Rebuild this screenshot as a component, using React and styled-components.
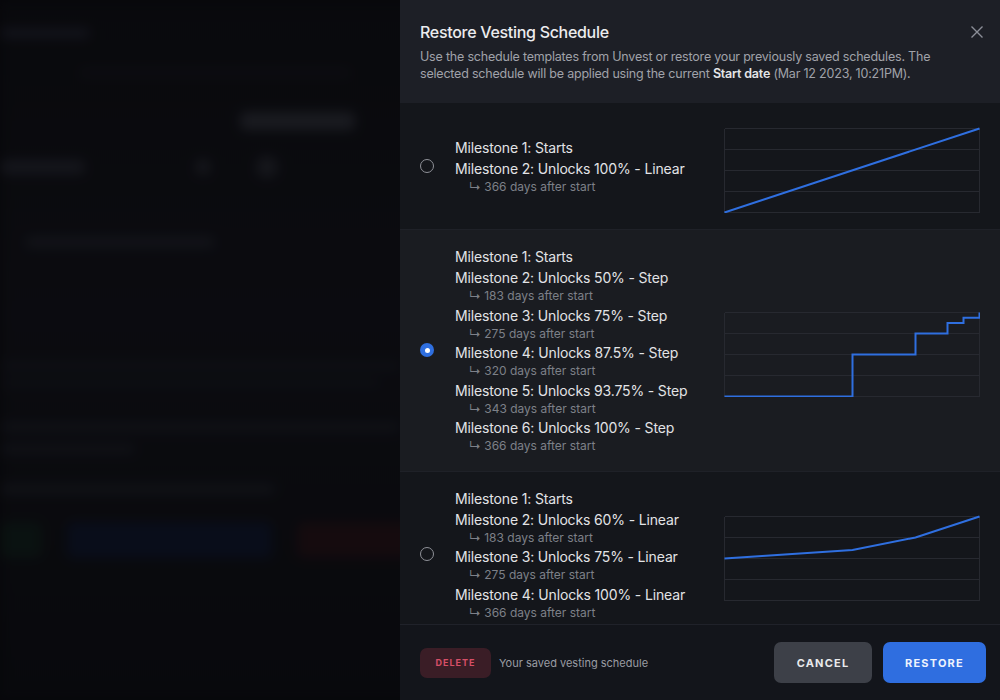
import React from 'react';
import styled, { createGlobalStyle } from 'styled-components';

const GlobalStyle = createGlobalStyle`
  html, body {
    margin: 0;
    padding: 0;
    background: #0b0b0e;
  }
  body {
    font-family: Inter, "Noto Sans", sans-serif;
    -webkit-font-smoothing: antialiased;
  }
  * {
    box-sizing: border-box;
  }
`;

/* blurred page behind the drawer */

const Page = styled.div`
  width: 1000px;
  height: 700px;
  overflow: hidden;
  background: linear-gradient(180deg, #101114 0%, #15161b 45%, #0f1013 100%);
  filter: blur(6px);
`;

const PageRow = styled.div`
  display: flex;
  align-items: center;
  gap: ${(p) => p.$gap || 0}px;
  margin-top: ${(p) => p.$top}px;
  height: ${(p) => p.$h}px;
`;

const Blob = styled.div`
  flex-shrink: 0;
  width: ${(p) => p.$w}px;
  height: ${(p) => p.$h}px;
  margin-left: ${(p) => p.$ml || 0}px;
  background: ${(p) => p.$c};
  border-radius: ${(p) => (p.$round ? '50%' : '6px')};
`;

const Scrim = styled.div`
  position: fixed;
  inset: 0;
  background: rgba(4, 4, 7, 0.55);
`;

/* drawer */

const Drawer = styled.aside`
  position: fixed;
  top: 0;
  right: 0;
  width: 600px;
  height: 100vh;
  display: flex;
  flex-direction: column;
  background: #15171c;
  color: #e3e4e6;
`;

const Header = styled.header`
  flex-shrink: 0;
  background: #1d1f26;
  padding: 21px 17px 21px 20px;
`;

const TitleRow = styled.div`
  display: flex;
  align-items: center;
  justify-content: space-between;
`;

const Title = styled.h2`
  margin: 0;
  font-size: 16px;
  line-height: 22px;
  font-weight: 500;
  letter-spacing: -0.3px;
  color: #ececee;
`;

const CloseButton = styled.button`
  width: 12px;
  height: 12px;
  padding: 0;
  border: 0;
  background: none;
  display: flex;
  cursor: pointer;
`;

const Description = styled.p`
  margin: 5px 0 0;
  max-width: 545px;
  font-size: 12.5px;
  line-height: 17px;
  letter-spacing: -0.2px;
  color: #a0a2a9;

  strong {
    color: #e4e5e8;
    font-weight: 600;
  }
`;

const List = styled.div`
  flex: 1;
  overflow-y: auto;
  scrollbar-width: none;
`;

const Option = styled.label`
  display: flex;
  align-items: center;
  padding: 16px 20px;
  border-bottom: 1px solid #1f2128;
  background: ${(p) => (p.$selected ? '#1a1c21' : '#14161b')};
  cursor: pointer;
`;

const Radio = styled.span`
  flex-shrink: 0;
  width: 14px;
  height: 14px;
  margin-right: 21px;
  border-radius: 50%;
  display: flex;
  align-items: center;
  justify-content: center;
  border: ${(p) => (p.$checked ? 'none' : '1.3px solid #8f9198')};
  background: ${(p) => (p.$checked ? '#2f6fe0' : 'transparent')};

  &::after {
    content: '';
    display: ${(p) => (p.$checked ? 'block' : 'none')};
    width: 5px;
    height: 5px;
    border-radius: 50%;
    background: #fff;
  }
`;

const Milestones = styled.div`
  flex: 1;
  display: flex;
  flex-direction: column;
`;

const MilestoneLine = styled.div`
  font-size: 14px;
  line-height: 21px;
  letter-spacing: -0.15px;
  color: #e2e3e6;
`;

const DaysLine = styled.div`
  padding-left: 14px;
  font-size: 12px;
  line-height: 16.5px;
  color: #7d8088;
`;

const ChartSvg = styled.svg`
  flex-shrink: 0;
  display: block;
`;

const Footer = styled.footer`
  height: 76px;
  flex-shrink: 0;
  display: flex;
  align-items: center;
  padding: 0 14px 0 20px;
  border-top: 1px solid #20222a;
  background: #13151b;
`;

const DeleteButton = styled.button`
  width: 71px;
  height: 30px;
  border: 0;
  border-radius: 7px;
  background: #3a1d26;
  color: #d64f67;
  font-family: inherit;
  font-size: 9px;
  font-weight: 700;
  letter-spacing: 1px;
  cursor: pointer;
`;

const SavedNote = styled.span`
  margin-left: 8px;
  font-size: 11px;
  color: #9a9ca3;
`;

const Actions = styled.div`
  margin-left: auto;
  display: flex;
  gap: 11px;
`;

const ActionButton = styled.button`
  width: ${(p) => p.$w}px;
  height: 41px;
  border: 0;
  border-radius: 7px;
  background: ${(p) => (p.$primary ? '#2f6ee0' : '#3d4048')};
  color: ${(p) => (p.$primary ? '#eef3fd' : '#e9eaec')};
  font-family: inherit;
  font-size: 11px;
  font-weight: 700;
  letter-spacing: 1.2px;
  cursor: pointer;
`;

const schedules = [
  {
    id: 'linear',
    milestones: [
      { label: 'Milestone 1: Starts' },
      { label: 'Milestone 2: Unlocks 100% - Linear', days: 366 },
    ],
    line: 'M0 84 L255 0',
  },
  {
    id: 'step',
    milestones: [
      { label: 'Milestone 1: Starts' },
      { label: 'Milestone 2: Unlocks 50% - Step', days: 183 },
      { label: 'Milestone 3: Unlocks 75% - Step', days: 275 },
      { label: 'Milestone 4: Unlocks 87.5% - Step', days: 320 },
      { label: 'Milestone 5: Unlocks 93.75% - Step', days: 343 },
      { label: 'Milestone 6: Unlocks 100% - Step', days: 366 },
    ],
    line: 'M0 84 H128 V42 H191 V21 H223 V10.5 H239 V5.25 H255 V0',
  },
  {
    id: 'saved',
    milestones: [
      { label: 'Milestone 1: Starts' },
      { label: 'Milestone 2: Unlocks 60% - Linear', days: 183 },
      { label: 'Milestone 3: Unlocks 75% - Linear', days: 275 },
      { label: 'Milestone 4: Unlocks 100% - Linear', days: 366 },
    ],
    line: 'M0 42 L128 33.5 L191 21 L255 0',
  },
];

const Chart = ({ d }) => (
  <ChartSvg width="256" height="94" viewBox="0 0 256 94">
    <g transform="translate(0.5 9.5)" shapeRendering="crispEdges" stroke="#272930" strokeWidth="1">
      {[0, 21, 42, 63, 84].map((y) => (
        <line key={y} x1="0" x2="255" y1={y} y2={y} />
      ))}
      <line x1="0" x2="0" y1="0" y2="84" />
      <line x1="255" x2="255" y1="0" y2="84" />
    </g>
    <path
      d={d}
      transform="translate(0.5 9.5)"
      fill="none"
      stroke="#2f6fe0"
      strokeWidth="2"
      strokeLinejoin="miter"
    />
  </ChartSvg>
);

const BackgroundPage = () => (
  <Page>
    <PageRow $top={28} $h={10}>
      <Blob $w={90} $h={10} $c="#262835" />
    </PageRow>
    <PageRow $top={30} $h={8}>
      <Blob $ml={80} $w={270} $h={7} $c="#1a1b21" />
    </PageRow>
    <PageRow $top={36} $h={18}>
      <Blob $ml={240} $w={115} $h={18} $c="#35373f" />
    </PageRow>
    <PageRow $top={26} $h={22} $gap={0}>
      <Blob $w={85} $h={14} $c="#2b2d36" />
      <Blob $ml={110} $w={16} $h={16} $c="#2c2e35" $round />
      <Blob $ml={45} $w={22} $h={22} $c="#2c2e35" $round />
    </PageRow>
    <PageRow $top={58} $h={12}>
      <Blob $ml={25} $w={190} $h={12} $c="#24262e" />
    </PageRow>
    <PageRow $top={114} $h={8}>
      <Blob $w={400} $h={8} $c="#1d1f25" />
    </PageRow>
    <PageRow $top={9} $h={8}>
      <Blob $w={380} $h={8} $c="#1b1d23" />
    </PageRow>
    <PageRow $top={35} $h={10}>
      <Blob $w={400} $h={10} $c="#202229" />
    </PageRow>
    <PageRow $top={12} $h={10}>
      <Blob $w={135} $h={10} $c="#202229" />
    </PageRow>
    <PageRow $top={30} $h={10}>
      <Blob $w={275} $h={10} $c="#22242b" />
    </PageRow>
    <PageRow $top={28} $h={36} $gap={25}>
      <Blob $w={42} $h={36} $c="#12241d" />
      <Blob $w={205} $h={36} $c="#111a32" />
      <Blob $w={180} $h={36} $c="#2a1418" />
    </PageRow>
  </Page>
);

const App = () => {
  const selected = 'step';

  return (
    <>
      <GlobalStyle />
      <BackgroundPage />
      <Scrim />
      <Drawer>
        <Header>
          <TitleRow>
            <Title>Restore Vesting Schedule</Title>
            <CloseButton aria-label="Close">
              <svg width="12" height="12" viewBox="0 0 12 12">
                <path d="M0.5 0.5 L11.5 11.5 M11.5 0.5 L0.5 11.5" stroke="#8b8e97" strokeWidth="1.4" />
              </svg>
            </CloseButton>
          </TitleRow>
          <Description>
            Use the schedule templates from Unvest or restore your previously saved schedules. The
            selected schedule will be applied using the current <strong>Start date</strong> (Mar 12
            2023, 10:21PM).
          </Description>
        </Header>

        <List>
          {schedules.map((s) => (
            <Option key={s.id} $selected={s.id === selected}>
              <Radio $checked={s.id === selected} />
              <Milestones>
                {s.milestones.map((m) => (
                  <React.Fragment key={m.label}>
                    <MilestoneLine>{m.label}</MilestoneLine>
                    {m.days && <DaysLine>↳ {m.days} days after start</DaysLine>}
                  </React.Fragment>
                ))}
              </Milestones>
              <Chart d={s.line} />
            </Option>
          ))}
        </List>

        <Footer>
          <DeleteButton>DELETE</DeleteButton>
          <SavedNote>Your saved vesting schedule</SavedNote>
          <Actions>
            <ActionButton $w={98}>CANCEL</ActionButton>
            <ActionButton $w={103} $primary>
              RESTORE
            </ActionButton>
          </Actions>
        </Footer>
      </Drawer>
    </>
  );
};

export default App;
